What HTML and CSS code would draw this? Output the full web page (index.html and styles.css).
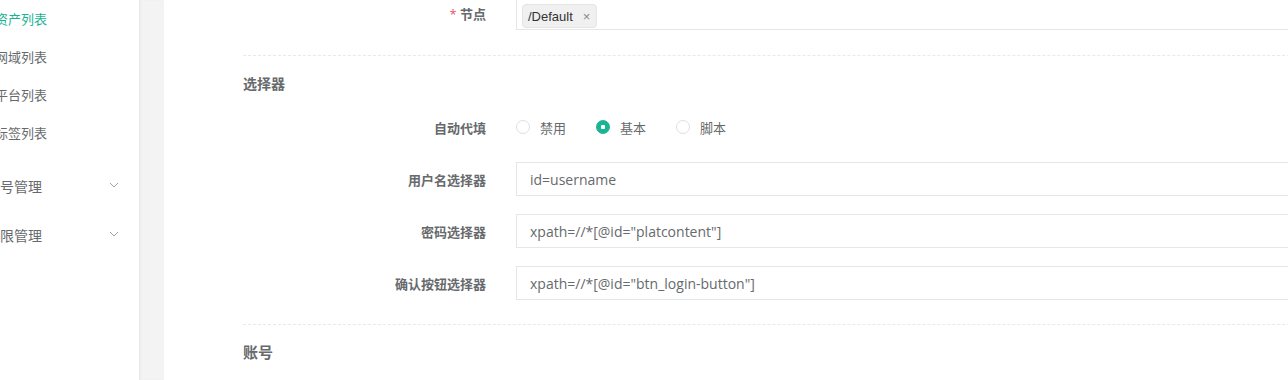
FILE: index.html
```html
<!DOCTYPE html>
<html lang="zh-CN">
  <head>
    <meta charset="UTF-8" />
    <title>资产详情</title>
    <link rel="stylesheet" href="styles.css">
  </head>
  <body>
    <div class="page">
      <div class="sidebar">
        <ul class="nav">
          <li class="sub active">资产列表</li>
          <li class="sub">网域列表</li>
          <li class="sub">平台列表</li>
          <li class="sub">标签列表</li>
          <li class="top">
            <span>账号管理</span>
            <svg class="chevron" width="10" height="6" viewBox="0 0 10 6">
              <path d="M1 1l4 4 4-4" fill="none" stroke="#9aa0a6" stroke-width="1" />
            </svg>
          </li>
          <li class="top">
            <span>权限管理</span>
            <svg class="chevron" width="10" height="6" viewBox="0 0 10 6">
              <path d="M1 1l4 4 4-4" fill="none" stroke="#9aa0a6" stroke-width="1" />
            </svg>
          </li>
        </ul>
      </div>

      <div class="gutter"></div>

      <div class="main">
        <div class="form-row first">
          <label class="form-label"><span class="req">*</span> 节点</label>
          <div class="form-input tags">
            <span class="tag">/Default <span class="tag-x">×</span></span>
          </div>
        </div>

        <div class="hr-dashed"></div>

        <h3 class="section">选择器</h3>

        <div class="form-row radios-row">
          <label class="form-label">自动代填</label>
          <div class="radios">
            <label class="radio"><span class="dot"></span>禁用</label>
            <label class="radio checked"><span class="dot"></span>基本</label>
            <label class="radio"><span class="dot"></span>脚本</label>
          </div>
        </div>

        <div class="form-row">
          <label class="form-label">用户名选择器</label>
          <input class="form-input" type="text" value="id=username" />
        </div>

        <div class="form-row">
          <label class="form-label">密码选择器</label>
          <input class="form-input" type="text" value='xpath=//*[@id="platcontent"]' />
        </div>

        <div class="form-row">
          <label class="form-label">确认按钮选择器</label>
          <input class="form-input" type="text" value='xpath=//*[@id="btn_login-button"]' />
        </div>

        <div class="hr-dashed last"></div>

        <h3 class="section">账号</h3>
      </div>
    </div>
  </body>
</html>
```

FILE: styles.css
```css
* {
  box-sizing: border-box;
}

html,
body {
  margin: 0;
  height: 100%;
  overflow: hidden;
}

body {
  font-family: "Open Sans", "Noto Sans CJK SC", sans-serif;
  color: #676a6c;
  background: #fff;
}

.page {
  display: flex;
  height: 380px;
  width: 1500px;
}

/* sidebar */
.sidebar {
  width: 139px;
  flex: none;
  background: #fff;
  overflow: hidden;
}

.nav {
  list-style: none;
  margin: 0 0 0 -5px;
  padding: 0;
}

.nav li {
  display: flex;
  align-items: center;
  white-space: nowrap;
}

.nav .sub {
  height: 38px;
  font-size: 13px;
  color: #676a6c;
}

.nav .sub:first-child {
  margin-top: -1px;
}

.nav .sub.active {
  color: #1ab394;
}

.nav li.top {
  height: 49px;
  font-size: 14px;
  margin-left: -9px;
  justify-content: space-between;
  padding-right: 20px;
}

.nav li.top:nth-child(5) {
  margin-top: 10px;
}

.chevron {
  margin-top: -2px;
}

.gutter {
  width: 25px;
  flex: none;
  background: #f3f3f4;
  box-shadow: inset 2px 0 3px -1px rgba(0, 0, 0, 0.06);
}

/* main form */
.main {
  flex: 1;
  padding-left: 79px;
}

.form-row {
  display: flex;
  align-items: center;
  height: 34px;
  margin-bottom: 18px;
}

.form-row.first {
  margin-top: -4px;
  margin-bottom: 0;
}

.form-label {
  width: 273px;
  flex: none;
  text-align: right;
  padding-right: 30px;
  font-size: 13px;
  font-weight: 700;
  color: #676a6c;
}

.req {
  color: #ed5565;
  font-weight: 400;
}

.form-input {
  flex: 1;
  height: 34px;
  border: 1px solid #e5e6e7;
  padding: 0 13px;
  font-family: "Open Sans", "Noto Sans CJK SC", sans-serif;
  font-size: 14px;
  color: #676a6c;
  outline: none;
  background: #fff;
}

.tags {
  display: flex;
  align-items: center;
  padding: 0 5px;
}

.tag {
  display: inline-flex;
  align-items: center;
  height: 24px;
  margin-top: 6px;
  padding: 0 6px 0 5px;
  background: #f0f0f0;
  border: 1px solid #e4e4e4;
  border-radius: 4px;
  font-family: "Liberation Sans", sans-serif;
  font-size: 13px;
  color: #333;
}

.tag-x {
  margin-left: 10px;
  color: #888;
  font-size: 13px;
}

.hr-dashed {
  border-top: 1px dashed #e7eaec;
  margin-top: 25px;
  height: 0;
}

.hr-dashed.last {
  margin-top: 24px;
}

.section {
  margin: 0;
  font-size: 14px;
  font-weight: 700;
  line-height: 20px;
  color: #676a6c;
  padding-top: 18px;
}

.radios-row {
  margin-top: 16px;
}

.radios {
  display: flex;
  align-items: center;
}

.radio {
  display: inline-flex;
  align-items: center;
  font-size: 13px;
  margin-right: 30px;
  color: #676a6c;
}

.radio .dot {
  width: 14px;
  height: 14px;
  border-radius: 50%;
  border: 1px solid #dcdfe6;
  margin-right: 10px;
  background: #fff;
}

.radio.checked .dot {
  border-color: #1ab394;
  background: radial-gradient(circle, #fff 0 2px, #1ab394 2.5px);
}

.section:last-child {
  padding-top: 17px;
  font-size: 15px;
}
```
